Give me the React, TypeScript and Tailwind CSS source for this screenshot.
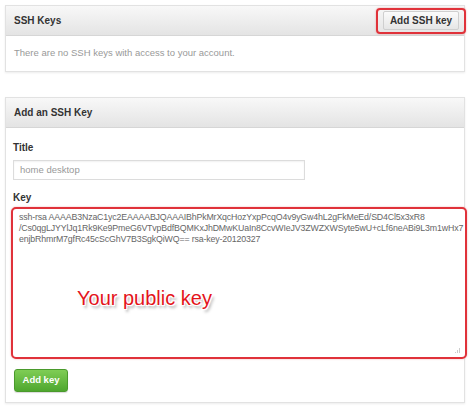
import React from 'react'

const keyLines = [
  'ssh-rsa AAAAB3NzaC1yc2EAAAABJQAAAIBhPkMrXqcHozYxpPcqO4v9yGw4hL2gFkMeEd/SD4Cl5x3xR8',
  '/Cs0qgLJYYlJq1Rk9Ke9PmeG6VTvpBdfBQMKxJhDMwKUaIn8CcvWIeJV3ZWZXWSyte5wU+cLf6neABi9L3m1wHx7',
  'enjbRhmrM7gfRc45cScGhV7B3SgkQiWQ== rsa-key-20120327',
]

const PanelHeader: React.FC<{ title: string; children?: React.ReactNode }> = ({ title, children }) => (
  <div className="flex h-[30px] items-center justify-between border-b border-[#d6d6d6] bg-gradient-to-b from-[#f8f8f8] to-[#e4e4e4] pl-[8px]">
    <span className="text-[10px] font-bold text-[#333]">{title}</span>
    {children}
  </div>
)

export default function App() {
  return (
    <div className="h-[410px] w-[474px] overflow-hidden bg-white pl-[5px] pt-[5px] font-['Liberation_Sans',Arial,sans-serif]">
      {/* existing keys */}
      <div className="relative w-[460px] border border-[#e2e2e2] shadow-[0_1px_2px_rgba(0,0,0,0.08)]">
        <PanelHeader title="SSH Keys">
          <div className="mr-[-2px] flex h-[26px] w-[90px] items-center justify-center rounded-[4px] border-2 border-[#e0323a] shadow-[0_0_2px_rgba(224,50,58,0.4)]">
            <button className="h-[19px] w-[76px] rounded-[2px] border border-[#cfcfcf] bg-gradient-to-b from-[#fbfbfb] to-[#e6e6e6] text-[10px] font-bold text-[#333]">
              Add SSH key
            </button>
          </div>
        </PanelHeader>
        <div className="flex h-[35px] items-center pl-[8px] text-[9.5px] text-[#999]">
          There are no SSH keys with access to your account.
        </div>
      </div>

      {/* add key form */}
      <div className="mt-[25px] h-[306px] w-[460px] border border-[#e2e2e2] shadow-[0_1px_2px_rgba(0,0,0,0.08)]">
        <PanelHeader title="Add an SSH Key" />
        <div className="px-[7px] pt-[14px]">
          <div className="text-[10px] font-bold leading-[12px] text-[#333]">Title</div>
          <div className="mt-[6px] flex h-[20px] w-[292px] items-center border border-[#dcdcdc] pl-[6px] text-[9.5px] text-[#999] shadow-[inset_0_1px_2px_rgba(0,0,0,0.06)]">
            home desktop
          </div>
          <div className="mt-[12px] text-[10px] font-bold leading-[12px] text-[#333]">Key</div>
          <div className="relative ml-[-2px] mt-[3px] h-[152px] w-[456px] rounded-[5px] border-2 border-[#e0323a] bg-white px-[6px] pt-[3px] shadow-[0_0_2px_rgba(224,50,58,0.4)]">
            {keyLines.map((line) => (
              <div key={line} className="whitespace-nowrap text-[8.8px] leading-[11px] tracking-[-0.15px] text-[#666]">
                {line}
              </div>
            ))}
            <span className="absolute left-[64px] top-[78px] text-[20px] leading-[22px] text-[#e4141b] [text-shadow:1px_1px_0_#fff,-1px_-1px_0_#fff,1px_-1px_0_#fff,-1px_1px_0_#fff,2px_3px_3px_rgba(0,0,0,0.35)]">
              Your public key
            </span>
            <svg className="absolute bottom-[3px] right-[4px]" width="8" height="8" viewBox="0 0 8 8">
              <rect x="6" y="2" width="1" height="5" fill="#ccc" />
              <rect x="4" y="4" width="1" height="3" fill="#ccc" />
              <rect x="2" y="6" width="1" height="1" fill="#ccc" />
            </svg>
          </div>
          <button className="ml-[1px] mt-[10px] h-[23px] w-[54px] rounded-[3px] border border-[#4a9a2c] bg-gradient-to-b from-[#7fcd55] to-[#4ea72e] text-[9.5px] font-bold text-white shadow-[0_1px_1px_rgba(0,0,0,0.15)]">
            Add key
          </button>
        </div>
      </div>
    </div>
  )
}
